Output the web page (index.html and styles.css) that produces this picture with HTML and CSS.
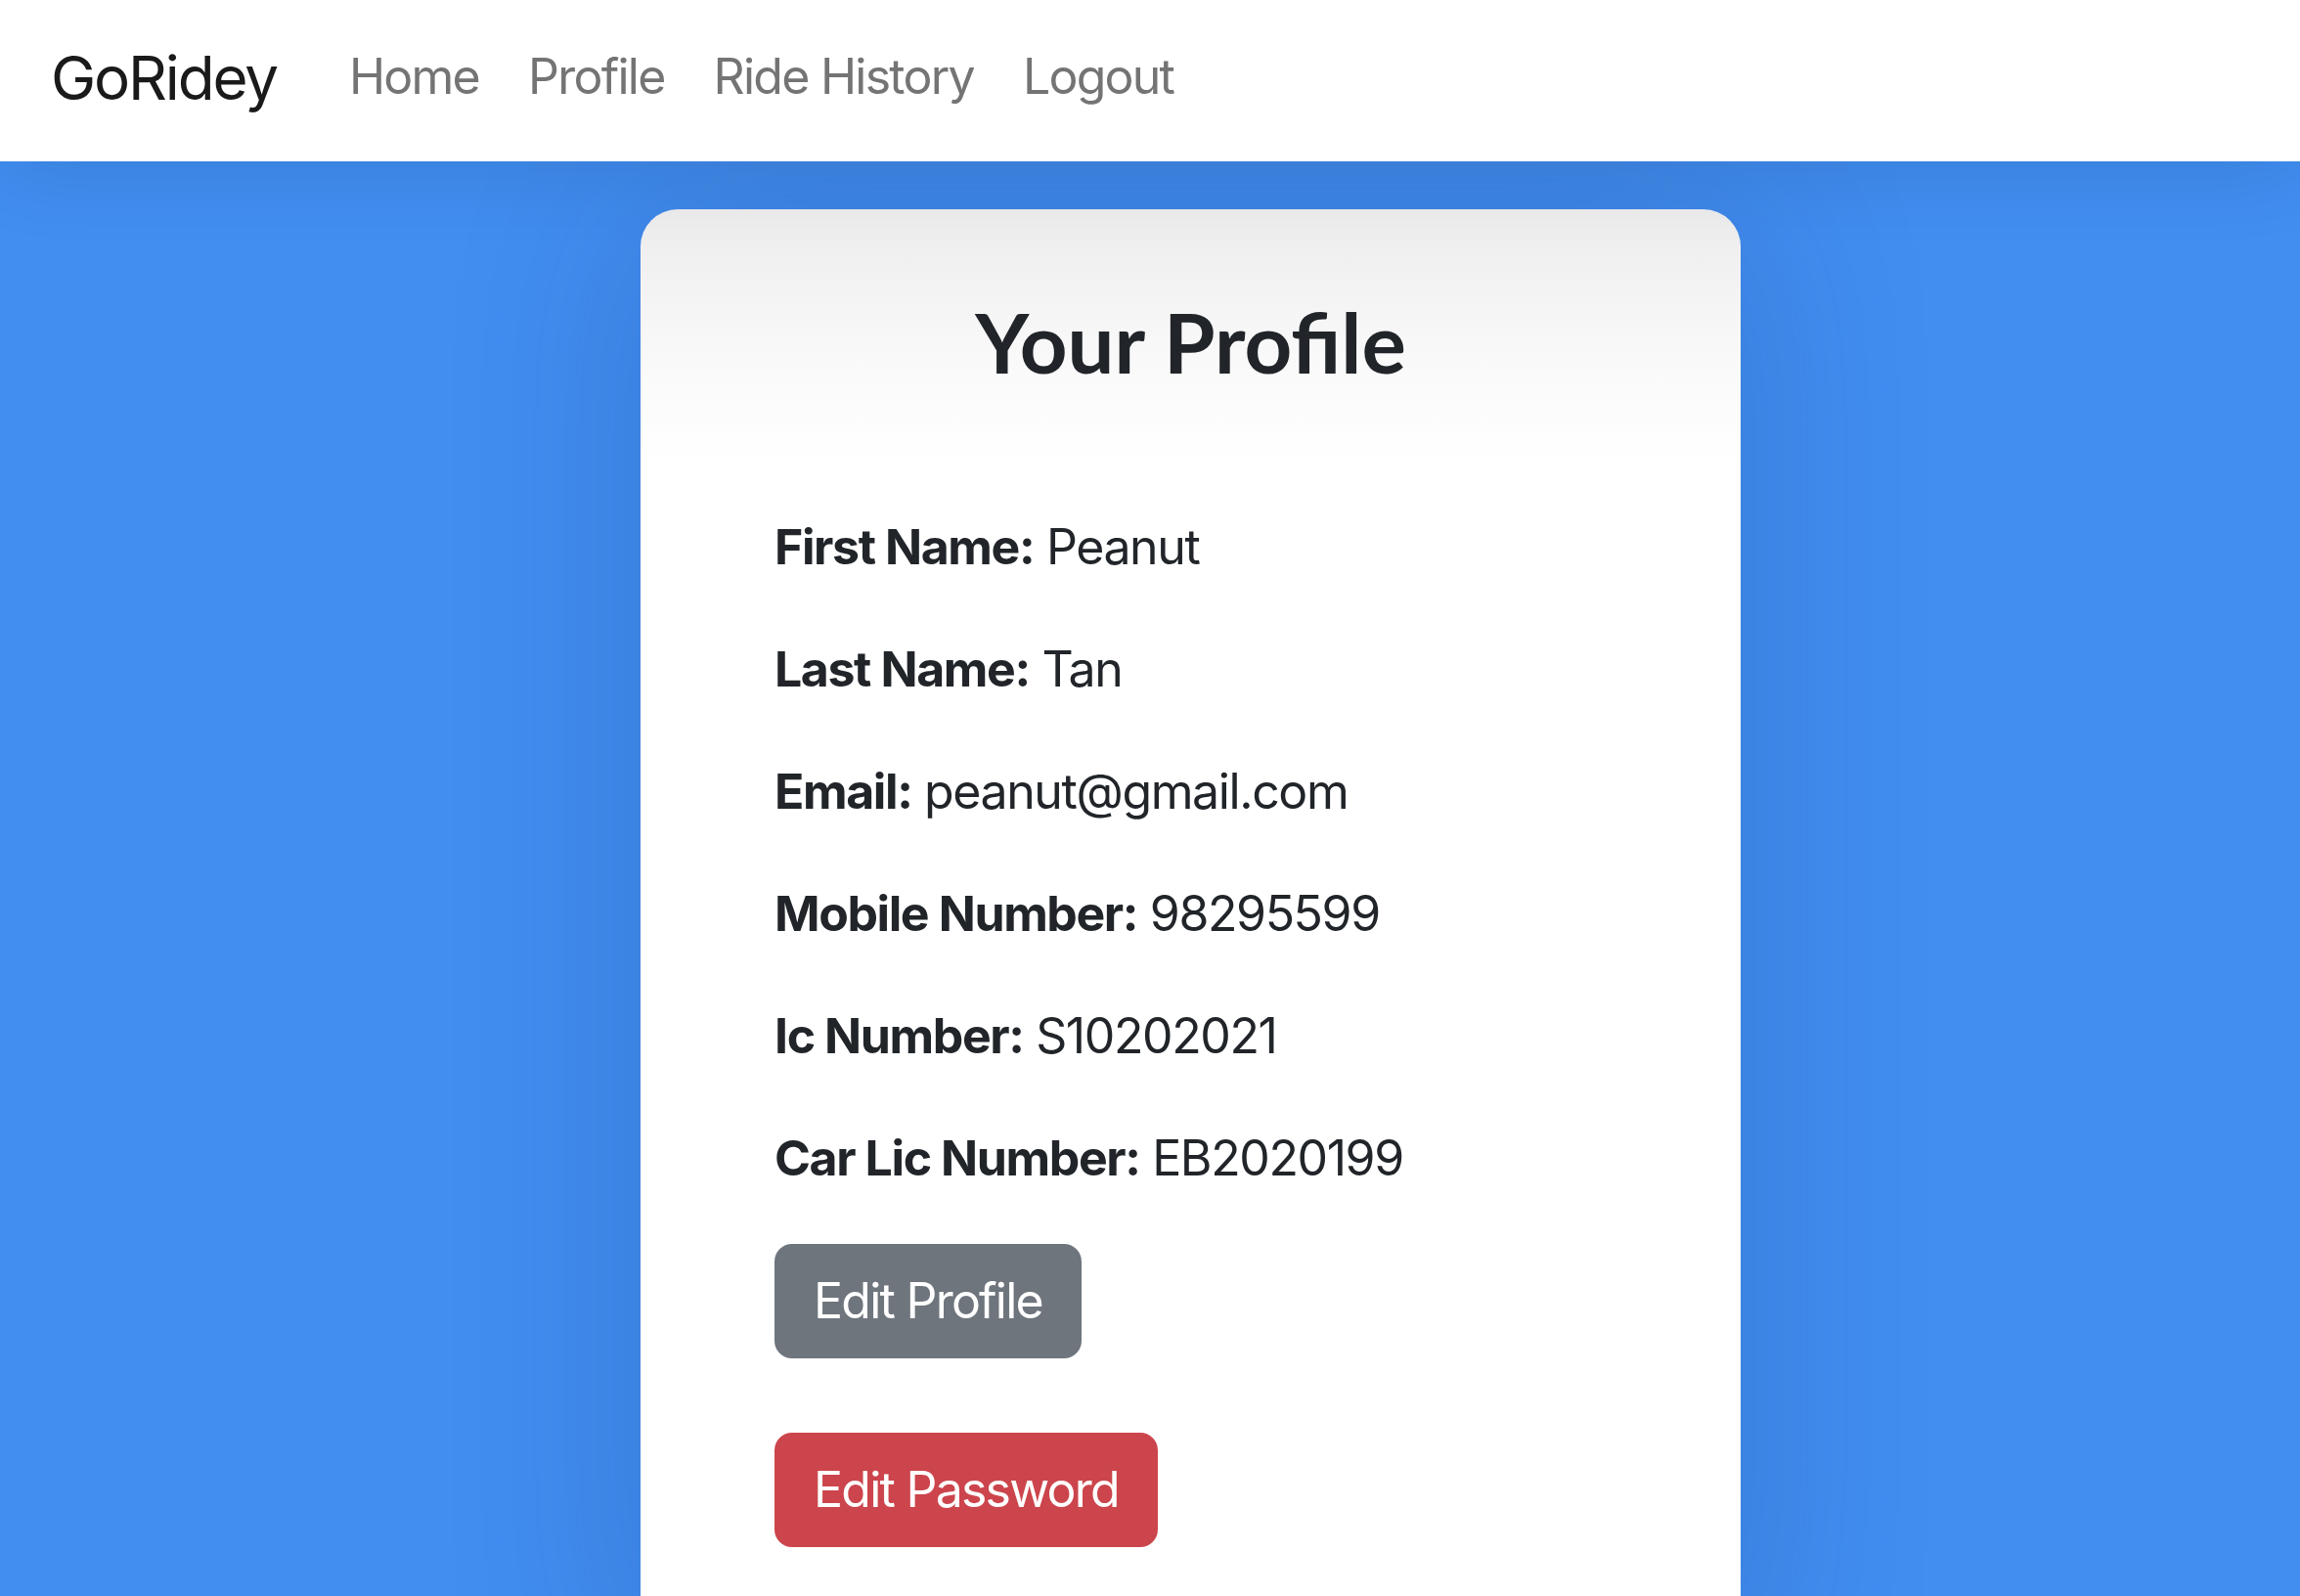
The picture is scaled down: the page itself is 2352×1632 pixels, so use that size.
FILE: index.html
```html
<!DOCTYPE html>
<html lang="en">
<head>
<meta charset="utf-8">
<title>GoRidey - Your Profile</title>
<link rel="stylesheet" href="styles.css">
</head>
<body>
<nav class="navbar">
  <a class="brand" href="#">GoRidey</a>
  <ul class="nav-links">
    <li><a href="#">Home</a></li>
    <li><a href="#">Profile</a></li>
    <li><a href="#">Ride History</a></li>
    <li><a href="#">Logout</a></li>
  </ul>
</nav>
<main class="page">
  <section class="card">
    <h1 class="card-title">Your Profile</h1>
    <p class="field"><strong>First Name:</strong> Peanut</p>
    <p class="field"><strong>Last Name:</strong> Tan</p>
    <p class="field"><strong>Email:</strong> peanut@gmail.com</p>
    <p class="field"><strong>Mobile Number:</strong> 98295599</p>
    <p class="field"><strong>Ic Number:</strong> S10202021</p>
    <p class="field"><strong>Car Lic Number:</strong> EB2020199</p>
    <div class="actions">
      <button class="btn btn-secondary" type="button">Edit Profile</button>
      <button class="btn btn-danger" type="button">Edit Password</button>
    </div>
  </section>
</main>
</body>
</html>
```

FILE: styles.css
```css
* { box-sizing: border-box; }

html, body {
  margin: 0;
  padding: 0;
  height: 100%;
}

body {
  font-family: Inter, "Liberation Sans", sans-serif;
  color: #212529;
  background: #418df0;
  overflow: hidden;
}

.navbar {
  position: relative;
  z-index: 2;
  height: 165px;
  background: #ffffff;
  display: flex;
  align-items: center;
  padding: 0 52px;
  box-shadow: 0 0 90px rgba(0, 0, 0, 0.12);
}

.brand {
  font-size: 62px;
  letter-spacing: -0.035em;
  color: #1a1a1a;
  text-decoration: none;
  margin-right: 49px;
  line-height: 1;
  padding-bottom: 6px;
}

.nav-links {
  list-style: none;
  margin: 0;
  padding: 0;
  display: flex;
}

.nav-links a {
  display: block;
  padding: 0 25px;
  font-size: 50px;
  letter-spacing: -0.035em;
  color: #747474;
  text-decoration: none;
  line-height: 1;
  padding-bottom: 10px;
}

.page {
  display: flex;
  justify-content: center;
  padding-top: 49px;
  padding-left: 83px;
}

.card {
  width: 1125px;
  min-height: 1500px;
  border-radius: 38px;
  background: linear-gradient(to bottom, #ececed 0px, #f9f9f9 150px, #ffffff 260px);
  box-shadow: 0 0 200px rgba(20, 40, 90, 0.18);
  padding: 83px 137px 60px 137px;
}

.card-title {
  font-family: Lato, "Open Sans", sans-serif;
  font-weight: 700;
  font-size: 85px;
  line-height: 105px;
  text-align: center;
  margin: 0 0 120px 0;
  color: #212529;
}

.field {
  font-size: 50px;
  line-height: 75px;
  margin: 0 0 50px 0;
  letter-spacing: -0.028em;
}

.field strong {
  font-weight: 700;
}

.actions {
  display: flex;
  flex-direction: column;
  align-items: flex-start;
  gap: 76px;
}

.btn {
  font-family: Inter, "Liberation Sans", sans-serif;
  font-size: 50px;
  letter-spacing: -0.035em;
  line-height: 75px;
  padding: 18px 37px;
  border: 3px solid transparent;
  border-radius: 18px;
  color: #ffffff;
  cursor: pointer;
}

.btn-secondary {
  background: #6f757d;
  border-color: #6f757d;
}

.btn-danger {
  background: #cc454c;
  border-color: #cc454c;
}
```
